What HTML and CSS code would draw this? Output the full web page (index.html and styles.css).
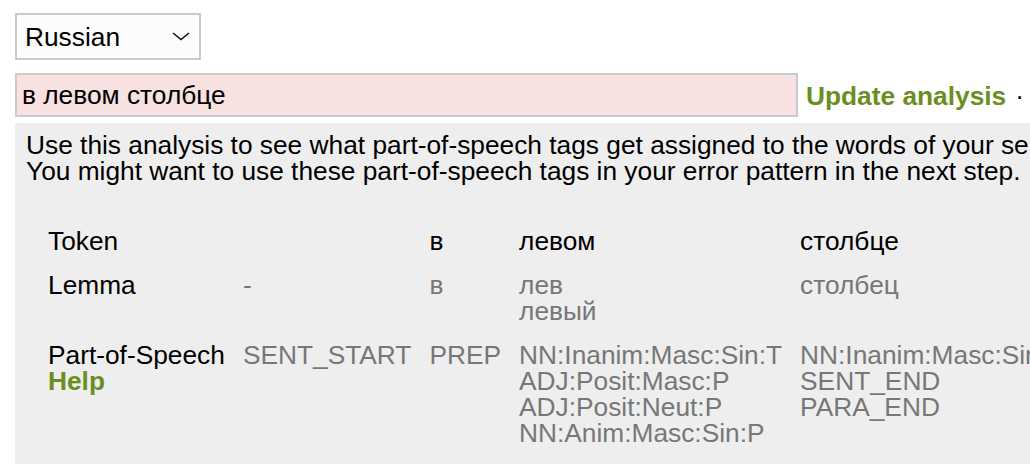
FILE: index.html
```html
<!DOCTYPE html>
<html lang="en">
<head>
<meta charset="utf-8">
<title>Analysis</title>
<link rel="stylesheet" href="styles.css">
</head>
<body>
<div class="page">
  <div class="lang-select">
    <span class="lang-label">Russian</span>
    <svg class="chevron" width="18" height="10" viewBox="0 0 18 10"><path d="M1 1 L9 7.5 L17 1" fill="none" stroke="#111" stroke-width="1.6"/></svg>
  </div>
  <div class="input-row">
    <div class="sentence-input">в левом столбце</div>
    <a class="action">Update analysis</a>
    <span class="sep">·</span>
  </div>
  <div class="analysis">
    <p class="intro">Use this analysis to see what part-of-speech tags get assigned to the words of your sentence.<br>You might want to use these part-of-speech tags in your error pattern in the next step.</p>
    <table class="tokens">
      <tr class="row-token">
        <td class="label">Token</td>
        <td></td>
        <td>в</td>
        <td>левом</td>
        <td>столбце</td>
      </tr>
      <tr class="row-lemma">
        <td class="label">Lemma</td>
        <td class="val">-</td>
        <td class="val">в</td>
        <td class="val">лев<br>левый</td>
        <td class="val">столбец</td>
      </tr>
      <tr class="row-pos">
        <td class="label">Part-of-Speech<br><a class="help">Help</a></td>
        <td class="val">SENT_START</td>
        <td class="val">PREP</td>
        <td class="val">NN:Inanim:Masc:Sin:T<br>ADJ:Posit:Masc:P<br>ADJ:Posit:Neut:P<br>NN:Anim:Masc:Sin:P</td>
        <td class="val">NN:Inanim:Masc:Sin:P<br>SENT_END<br>PARA_END</td>
      </tr>
    </table>
  </div>
</div>
</body>
</html>
```
FILE: styles.css
```css
html { overflow: hidden; }
body {
  margin: 0;
  font-family: "Liberation Sans", Arial, sans-serif;
  font-size: 26.3px;
  line-height: 26px;
  color: #000;
  background: #fff;
}
.page {
  padding: 13px 0 0 15px;
  width: 1400px;
}
.lang-select {
  width: 186px;
  height: 47px;
  box-sizing: border-box;
  border: 2px solid #cacaca;
  background: #fcfcfc;
  display: flex;
  align-items: center;
  justify-content: space-between;
  padding: 0 9px 0 8px;
}
.chevron { display: block; margin-top: 1px; }
.input-row {
  display: flex;
  align-items: center;
  margin-top: 13px;
}
.sentence-input {
  width: 783px;
  height: 44px;
  box-sizing: border-box;
  border: 2px solid #cacaca;
  background: #f8e1e1;
  padding: 0 5px;
  display: flex;
  align-items: center;
}
.action {
  margin-left: 8px;
  color: #6b8e23;
  font-weight: bold;
  margin-top: 2px;
}
.sep { margin-left: 9px; margin-top: 2px; }
.analysis {
  margin-top: 6px;
  background: #eeeeee;
  padding: 9px 11px 40px;
  min-height: 400px;
}
.intro {
  margin: 0;
  white-space: nowrap;
}
.tokens {
  border-collapse: collapse;
  margin-top: 35px;
  margin-left: 13px;
}
.tokens td {
  padding: 9px 18px 9px 0;
  vertical-align: top;
  white-space: nowrap;
  text-align: left;
}
.tokens td.label { padding-left: 9px; }
.tokens td.val { color: #777; }
.help {
  color: #6b8e23;
  font-weight: bold;
}
```
